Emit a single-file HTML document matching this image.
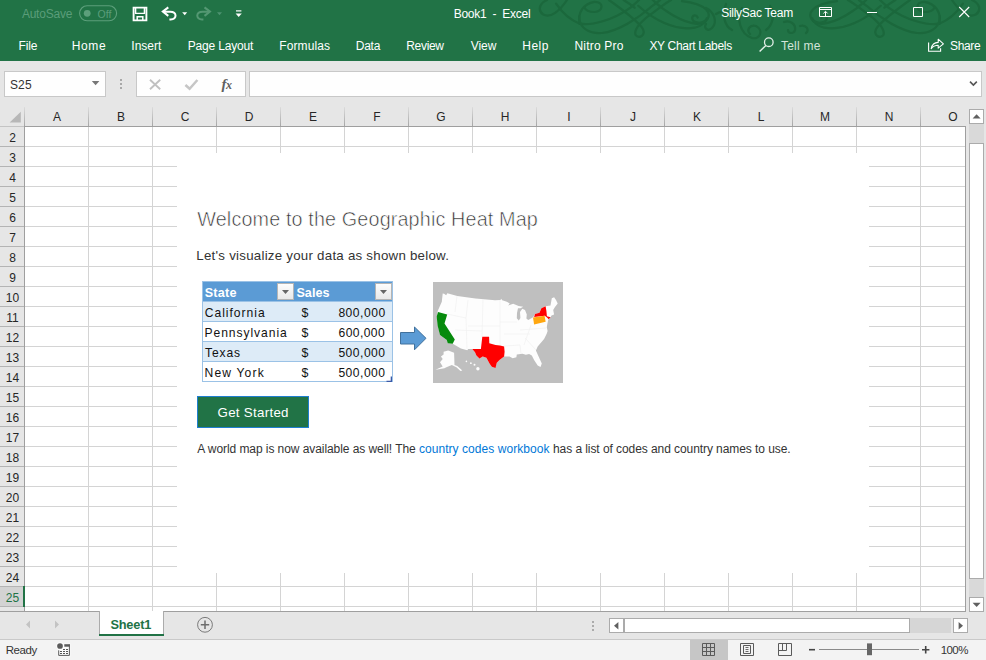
<!DOCTYPE html>
<html><head><meta charset="utf-8"><title>Book1 - Excel</title>
<style>
html,body{margin:0;padding:0;}
body{width:986px;height:660px;overflow:hidden;background:#e6e6e6;position:relative;font-family:"Liberation Sans",sans-serif;}
.a{position:absolute;}
.t{position:absolute;white-space:pre;line-height:1;}
.box{position:absolute;background:#fefefe;border:1px solid #c8c8c8;box-sizing:border-box;}
.ch{position:absolute;top:110.6px;width:64px;text-align:center;font-size:12px;line-height:1;color:#262626;}
.rh{position:absolute;left:1px;width:23px;text-align:center;font-size:12px;line-height:1;color:#262626;}
.vl{position:absolute;width:1px;background:#d4d4d4;}
.hl{position:absolute;height:1px;background:#d4d4d4;}
</style></head><body>

<div class="a" style="left:0;top:0;width:986px;height:61px;background:#217346;overflow:hidden;">
<svg class="a" style="left:0;top:0" width="986" height="61" fill="none" stroke="#1b673c" stroke-width="2.2" stroke-linecap="round" opacity="0.9"><path d="M 567.0 0.0 C 559.7 11.0 550.6 18.3 543.3 14.6 C 537.8 11.0 538.7 3.7 547.0 0.0"/><path d="M 556.1 3.7 C 563.4 14.6 572.5 21.0 579.8 23.7"/><path d="M 579.8 23.7 C 577.1 12.8 583.5 3.7 594.4 1.8 C 603.9 1.5 603.9 11.3 594.4 12.0 C 588.9 12.0 585.3 9.5 584.4 7.3"/><path d="M 579.8 23.7 C 590.8 25.9 612.7 20.4 630.9 7.3 L 639.1 0.0"/><path d="M 579.1 16.8 C 579.4 29.2 590.8 34.0 601.7 33.0 C 618.1 31.4 638.2 18.3 652.8 5.5 L 660.1 0.0"/><path d="M 609.0 0.0 C 621.8 9.1 634.6 18.3 641.9 27.4 C 647.7 35.0 638.2 39.8 635.5 34.7 C 633.7 29.2 641.9 20.1 652.8 12.8 C 660.1 7.3 667.4 1.8 671.1 0.0"/><path d="M 638.2 5.8 C 652.8 19.0 674.7 31.4 694.8 27.7 C 700.3 26.5 704.9 22.8 706.7 18.3"/><path d="M 652.8 0.0 C 663.8 11.0 682.0 22.3 696.6 23.9 C 708.0 24.1 711.6 15.0 706.1 9.5 C 700.7 4.0 691.5 2.2 682.0 1.1"/><path d="M 705.8 20.4 C 700.3 24.8 691.5 22.3 692.3 17.5 C 693.0 14.6 696.6 14.6 697.7 17.5"/><path d="M 623.6 0.0 C 627.3 2.2 630.9 4.7 634.6 7.7"/><path d="M 952.0 0.0 C 959.3 11.0 968.4 18.3 975.7 14.6 C 981.2 11.0 980.3 3.7 972.0 0.0"/><path d="M 962.9 3.7 C 955.6 14.6 946.5 21.0 939.2 23.7"/><path d="M 939.2 23.7 C 941.9 12.8 935.5 3.7 924.6 1.8 C 915.1 1.5 915.1 11.3 924.6 12.0 C 930.1 12.0 933.7 9.5 934.6 7.3"/><path d="M 939.2 23.7 C 928.2 25.9 906.3 20.4 888.1 7.3 L 879.9 0.0"/><path d="M 939.9 16.8 C 939.6 29.2 928.2 34.0 917.3 33.0 C 900.9 31.4 880.8 18.3 866.2 5.5 L 858.9 0.0"/><path d="M 910.0 0.0 C 897.2 9.1 884.4 18.3 877.1 27.4 C 871.3 35.0 880.8 39.8 883.5 34.7 C 885.3 29.2 877.1 20.1 866.2 12.8 C 858.9 7.3 851.6 1.8 847.9 0.0"/><path d="M 880.8 5.8 C 866.2 19.0 844.3 31.4 824.2 27.7 C 818.7 26.5 814.1 22.8 812.3 18.3"/><path d="M 866.2 0.0 C 855.2 11.0 837.0 22.3 822.4 23.9 C 811.0 24.1 807.4 15.0 812.9 9.5 C 818.3 4.0 827.5 2.2 837.0 1.1"/><path d="M 813.2 20.4 C 818.7 24.8 827.5 22.3 826.7 17.5 C 826.0 14.6 822.4 14.6 821.3 17.5"/><path d="M 895.4 0.0 C 891.7 2.2 888.1 4.7 884.4 7.7"/><path d="M706 8 C714 12 718 22 712 28 C708 32 703 28 706 24"/><path d="M726 4 C722 14 724 26 732 30"/><path d="M742 8 C736 18 740 34 752 38 C760 40 764 30 756 26 C750 24 746 30 750 34"/><path d="M770 6 C776 14 772 26 766 30"/><path d="M784 22 C790 20 796 24 795 30 C794 34 788 34 788 30"/><path d="M800 26 C806 24 810 30 806 33"/><path d="M716 14 C722 10 730 12 734 18"/></svg>
</div>
<div class="box" style="left:4px;top:71px;width:102px;height:26px;"></div>
<div class="box" style="left:136px;top:71px;width:110px;height:26px;"></div>
<div class="box" style="left:249px;top:71px;width:733px;height:26px;"></div>
<svg class="a" style="left:0;top:0" width="986" height="106" fill="none">
<rect x="79.6" y="5.8" width="37" height="15" rx="7.5" stroke="#5c9f7b" stroke-width="1.1"/>
<circle cx="87.2" cy="13.3" r="3.4" fill="#5c9f7b"/>
<path d="M133.6 7.6H146.4V20.4H133.6Z" stroke="#fff" stroke-width="1.9"/>
<path d="M135.6 8V13.4H144.4V8" stroke="#fff" stroke-width="1.4"/>
<path d="M137.2 20.4V16.8H142.8V20.4" stroke="#fff" stroke-width="1.5"/>
<path d="M168.3 7.4L162.8 11.6L168.3 15.9" stroke="#fff" stroke-width="2"/>
<path d="M163.4 11.7H170.2C177.2 11.7 177.2 19.4 170.8 19.4H169.4" stroke="#fff" stroke-width="2"/>
<path d="M182.2 12.2H187.2L184.7 15.2Z" fill="#fff"/>
<path d="M204.5 7.4L210 11.6L204.5 15.9" stroke="#549873" stroke-width="2"/>
<path d="M209.4 11.7H202.6C195.6 11.7 195.6 19.4 202 19.4H203.4" stroke="#549873" stroke-width="2"/>
<path d="M217 12.2H222L219.5 15.2Z" fill="#4d9270"/>
<path d="M236 10.9H241.4" stroke="#fff" stroke-width="1.2"/>
<path d="M235.6 13.4H241.8L238.7 17Z" fill="#fff"/>
<path d="M819.5 7.5H831.5V16.5H819.5Z" stroke="#fff" stroke-width="1"/>
<path d="M819.5 9.5H831.5" stroke="#fff" stroke-width="1"/>
<path d="M825.5 16V11.6M823.4 13.4L825.5 11.3L827.6 13.4" stroke="#fff" stroke-width="1"/>
<path d="M867 12.5H877" stroke="#fff" stroke-width="1"/>
<path d="M913.5 7.5H922.5V16.5H913.5Z" stroke="#fff" stroke-width="1"/>
<path d="M959.2 7L969.2 17M969.2 7L959.2 17" stroke="#fff" stroke-width="1.1"/>
<circle cx="768.8" cy="42.2" r="4.3" stroke="#e3efe8" stroke-width="1.3"/>
<path d="M765.8 45.4L759.6 51.6" stroke="#e3efe8" stroke-width="1.4"/>
<path d="M928.6 42.5V51.3H940.6V48.2" stroke="#fff" stroke-width="1.1"/>
<path d="M931.2 48.6C932 44.6 934.5 42.6 938.2 42.4V39.2L943.4 43.8L938.2 48.2V45.2C935.2 45.2 933 46.2 931.2 48.6Z" stroke="#fff" stroke-width="1.1" stroke-linejoin="round"/>
<path d="M91.8 81H99.4L95.6 85.2Z" fill="#777"/>
<rect x="120" y="79" width="2" height="2" fill="#a8a8a8"/>
<rect x="120" y="83" width="2" height="2" fill="#a8a8a8"/>
<rect x="120" y="87" width="2" height="2" fill="#a8a8a8"/>
<path d="M150 79.8L160.2 89.2M160.2 79.8L150 89.2" stroke="#c0c0c0" stroke-width="1.9"/>
<path d="M185.4 85L189.6 88.8L197.4 80" stroke="#c6c6c6" stroke-width="2.5"/>
<path d="M970 81.6L973.4 85L976.8 81.6" stroke="#555" stroke-width="1.6"/>
</svg>
<span class="t" style="left:221.5px;top:77px;font-family:'Liberation Serif',serif;font-style:italic;font-weight:700;font-size:15px;color:#606060;letter-spacing:-0.6px;">f<span style="font-size:12px;">x</span></span>
<div class="a" style="left:25px;top:127px;width:940px;height:484px;background:#fff;"></div>
<div class="vl" style="left:88px;top:127px;height:484px;"></div>
<div class="vl" style="left:152px;top:127px;height:484px;"></div>
<div class="vl" style="left:216px;top:127px;height:484px;"></div>
<div class="vl" style="left:280px;top:127px;height:484px;"></div>
<div class="vl" style="left:344px;top:127px;height:484px;"></div>
<div class="vl" style="left:408px;top:127px;height:484px;"></div>
<div class="vl" style="left:472px;top:127px;height:484px;"></div>
<div class="vl" style="left:536px;top:127px;height:484px;"></div>
<div class="vl" style="left:600px;top:127px;height:484px;"></div>
<div class="vl" style="left:664px;top:127px;height:484px;"></div>
<div class="vl" style="left:728px;top:127px;height:484px;"></div>
<div class="vl" style="left:792px;top:127px;height:484px;"></div>
<div class="vl" style="left:856px;top:127px;height:484px;"></div>
<div class="vl" style="left:920px;top:127px;height:484px;"></div>
<div class="hl" style="left:25px;top:146px;width:940px;"></div>
<div class="hl" style="left:25px;top:166px;width:940px;"></div>
<div class="hl" style="left:25px;top:186px;width:940px;"></div>
<div class="hl" style="left:25px;top:206px;width:940px;"></div>
<div class="hl" style="left:25px;top:226px;width:940px;"></div>
<div class="hl" style="left:25px;top:246px;width:940px;"></div>
<div class="hl" style="left:25px;top:266px;width:940px;"></div>
<div class="hl" style="left:25px;top:286px;width:940px;"></div>
<div class="hl" style="left:25px;top:306px;width:940px;"></div>
<div class="hl" style="left:25px;top:326px;width:940px;"></div>
<div class="hl" style="left:25px;top:346px;width:940px;"></div>
<div class="hl" style="left:25px;top:366px;width:940px;"></div>
<div class="hl" style="left:25px;top:386px;width:940px;"></div>
<div class="hl" style="left:25px;top:406px;width:940px;"></div>
<div class="hl" style="left:25px;top:426px;width:940px;"></div>
<div class="hl" style="left:25px;top:446px;width:940px;"></div>
<div class="hl" style="left:25px;top:466px;width:940px;"></div>
<div class="hl" style="left:25px;top:486px;width:940px;"></div>
<div class="hl" style="left:25px;top:506px;width:940px;"></div>
<div class="hl" style="left:25px;top:526px;width:940px;"></div>
<div class="hl" style="left:25px;top:546px;width:940px;"></div>
<div class="hl" style="left:25px;top:566px;width:940px;"></div>
<div class="hl" style="left:25px;top:586px;width:940px;"></div>
<div class="hl" style="left:25px;top:606px;width:940px;"></div>
<div class="a" style="left:24px;top:107px;width:1px;height:19px;background:linear-gradient(#dcdcdc,#a6a6a6);"></div>
<div class="a" style="left:88px;top:107px;width:1px;height:19px;background:linear-gradient(#dcdcdc,#a6a6a6);"></div>
<div class="a" style="left:152px;top:107px;width:1px;height:19px;background:linear-gradient(#dcdcdc,#a6a6a6);"></div>
<div class="a" style="left:216px;top:107px;width:1px;height:19px;background:linear-gradient(#dcdcdc,#a6a6a6);"></div>
<div class="a" style="left:280px;top:107px;width:1px;height:19px;background:linear-gradient(#dcdcdc,#a6a6a6);"></div>
<div class="a" style="left:344px;top:107px;width:1px;height:19px;background:linear-gradient(#dcdcdc,#a6a6a6);"></div>
<div class="a" style="left:408px;top:107px;width:1px;height:19px;background:linear-gradient(#dcdcdc,#a6a6a6);"></div>
<div class="a" style="left:472px;top:107px;width:1px;height:19px;background:linear-gradient(#dcdcdc,#a6a6a6);"></div>
<div class="a" style="left:536px;top:107px;width:1px;height:19px;background:linear-gradient(#dcdcdc,#a6a6a6);"></div>
<div class="a" style="left:600px;top:107px;width:1px;height:19px;background:linear-gradient(#dcdcdc,#a6a6a6);"></div>
<div class="a" style="left:664px;top:107px;width:1px;height:19px;background:linear-gradient(#dcdcdc,#a6a6a6);"></div>
<div class="a" style="left:728px;top:107px;width:1px;height:19px;background:linear-gradient(#dcdcdc,#a6a6a6);"></div>
<div class="a" style="left:792px;top:107px;width:1px;height:19px;background:linear-gradient(#dcdcdc,#a6a6a6);"></div>
<div class="a" style="left:856px;top:107px;width:1px;height:19px;background:linear-gradient(#dcdcdc,#a6a6a6);"></div>
<div class="a" style="left:920px;top:107px;width:1px;height:19px;background:linear-gradient(#dcdcdc,#a6a6a6);"></div>
<div class="ch" style="left:25px;">A</div>
<div class="ch" style="left:89px;">B</div>
<div class="ch" style="left:153px;">C</div>
<div class="ch" style="left:217px;">D</div>
<div class="ch" style="left:281px;">E</div>
<div class="ch" style="left:345px;">F</div>
<div class="ch" style="left:409px;">G</div>
<div class="ch" style="left:473px;">H</div>
<div class="ch" style="left:537px;">I</div>
<div class="ch" style="left:601px;">J</div>
<div class="ch" style="left:665px;">K</div>
<div class="ch" style="left:729px;">L</div>
<div class="ch" style="left:793px;">M</div>
<div class="ch" style="left:857px;">N</div>
<div class="ch" style="left:921px;">O</div>
<div class="a" style="left:966px;top:100px;width:20px;height:26px;background:#e6e6e6;"></div>
<div class="a" style="left:0;top:126px;width:966px;height:1px;background:#9f9f9f;"></div>
<div class="a" style="left:0;top:126px;width:24px;height:1px;background:#c4c4c4;"></div>
<div class="a" style="left:0;top:127px;width:24px;height:484px;background:#e6e6e6;"></div>
<div class="a" style="left:0;top:587px;width:24px;height:19px;background:#d3d3d3;"></div>
<div class="a" style="left:0;top:146px;width:24px;height:1px;background:#b4b4b4;"></div>
<div class="a" style="left:0;top:166px;width:24px;height:1px;background:#b4b4b4;"></div>
<div class="a" style="left:0;top:186px;width:24px;height:1px;background:#b4b4b4;"></div>
<div class="a" style="left:0;top:206px;width:24px;height:1px;background:#b4b4b4;"></div>
<div class="a" style="left:0;top:226px;width:24px;height:1px;background:#b4b4b4;"></div>
<div class="a" style="left:0;top:246px;width:24px;height:1px;background:#b4b4b4;"></div>
<div class="a" style="left:0;top:266px;width:24px;height:1px;background:#b4b4b4;"></div>
<div class="a" style="left:0;top:286px;width:24px;height:1px;background:#b4b4b4;"></div>
<div class="a" style="left:0;top:306px;width:24px;height:1px;background:#b4b4b4;"></div>
<div class="a" style="left:0;top:326px;width:24px;height:1px;background:#b4b4b4;"></div>
<div class="a" style="left:0;top:346px;width:24px;height:1px;background:#b4b4b4;"></div>
<div class="a" style="left:0;top:366px;width:24px;height:1px;background:#b4b4b4;"></div>
<div class="a" style="left:0;top:386px;width:24px;height:1px;background:#b4b4b4;"></div>
<div class="a" style="left:0;top:406px;width:24px;height:1px;background:#b4b4b4;"></div>
<div class="a" style="left:0;top:426px;width:24px;height:1px;background:#b4b4b4;"></div>
<div class="a" style="left:0;top:446px;width:24px;height:1px;background:#b4b4b4;"></div>
<div class="a" style="left:0;top:466px;width:24px;height:1px;background:#b4b4b4;"></div>
<div class="a" style="left:0;top:486px;width:24px;height:1px;background:#b4b4b4;"></div>
<div class="a" style="left:0;top:506px;width:24px;height:1px;background:#b4b4b4;"></div>
<div class="a" style="left:0;top:526px;width:24px;height:1px;background:#b4b4b4;"></div>
<div class="a" style="left:0;top:546px;width:24px;height:1px;background:#b4b4b4;"></div>
<div class="a" style="left:0;top:566px;width:24px;height:1px;background:#b4b4b4;"></div>
<div class="a" style="left:0;top:586px;width:24px;height:1px;background:#b4b4b4;"></div>
<div class="a" style="left:0;top:606px;width:24px;height:1px;background:#b4b4b4;"></div>
<div class="rh" style="top:131.64px">2</div>
<div class="rh" style="top:151.64px">3</div>
<div class="rh" style="top:171.64px">4</div>
<div class="rh" style="top:191.64px">5</div>
<div class="rh" style="top:211.64px">6</div>
<div class="rh" style="top:231.64px">7</div>
<div class="rh" style="top:251.64px">8</div>
<div class="rh" style="top:271.64px">9</div>
<div class="rh" style="top:291.64px">10</div>
<div class="rh" style="top:311.64px">11</div>
<div class="rh" style="top:331.64px">12</div>
<div class="rh" style="top:351.64px">13</div>
<div class="rh" style="top:371.64px">14</div>
<div class="rh" style="top:391.64px">15</div>
<div class="rh" style="top:411.64px">16</div>
<div class="rh" style="top:431.64px">17</div>
<div class="rh" style="top:451.64px">18</div>
<div class="rh" style="top:471.64px">19</div>
<div class="rh" style="top:491.64px">20</div>
<div class="rh" style="top:511.64px">21</div>
<div class="rh" style="top:531.64px">22</div>
<div class="rh" style="top:551.64px">23</div>
<div class="rh" style="top:571.64px">24</div>
<div class="rh" style="top:591.64px;color:#217346">25</div>
<div class="a" style="left:24px;top:127px;width:1px;height:484px;background:#9f9f9f;"></div>
<div class="a" style="left:23px;top:586px;width:2px;height:21px;background:#217346;"></div>
<svg class="a" style="left:0;top:107px" width="24" height="19"><path d="M20.8 4.7V15.6H9.6Z" fill="#b7b7b7"/></svg>
<div class="a" style="left:965px;top:126px;width:1px;height:486px;background:#9f9f9f;"></div>
<div class="a" style="left:0;top:611px;width:966px;height:1px;background:#9f9f9f;"></div>
<div class="a" style="left:177px;top:153px;width:692px;height:420px;background:#fff;"></div>
<div class="a" style="left:202px;top:281px;width:191px;height:101px;background:#9bc2e6;"></div>
<div class="a" style="left:203px;top:282px;width:189px;height:19px;background:#5b9bd5;"></div>
<div class="a" style="left:203px;top:302px;width:189px;height:19px;background:#ddebf7;"></div>
<div class="a" style="left:203px;top:322px;width:189px;height:19px;background:#ffffff;"></div>
<div class="a" style="left:203px;top:342px;width:189px;height:19px;background:#ddebf7;"></div>
<div class="a" style="left:203px;top:362px;width:189px;height:19px;background:#ffffff;"></div>
<div class="a" style="left:277px;top:283px;width:17px;height:17px;box-sizing:border-box;border:1px solid #b5b5b5;background:linear-gradient(#fdfdfd,#e9e9e9);"></div>
<svg class="a" style="left:277px;top:283px" width="17" height="17"><path d="M5 7H12L8.5 11Z" fill="#666"/></svg>
<div class="a" style="left:375px;top:283px;width:17px;height:17px;box-sizing:border-box;border:1px solid #b5b5b5;background:linear-gradient(#fdfdfd,#e9e9e9);"></div>
<svg class="a" style="left:375px;top:283px" width="17" height="17"><path d="M5 7H12L8.5 11Z" fill="#666"/></svg>
<svg class="a" style="left:386px;top:376px" width="6" height="6"><path d="M5.5 0.5V5.5H0.5" stroke="#3b5aa8" stroke-width="1.6" fill="none"/></svg>
<svg class="a" style="left:396px;top:322px" width="34" height="32"><path d="M4.5 10.5H18.5V5L30 16.3L18.5 27.8V22H4.5Z" fill="#5b9bd5" stroke="#41719c" stroke-width="1"/></svg>
<div class="a" style="left:433px;top:282px;width:130px;height:101px;background:#bfbfbf;"></div>
<svg class="a" style="left:0;top:0" width="986" height="660">
<polygon points="442.7,293.4 444.1,293.8 446.2,295.2 447.3,293.2 457.3,295.9 475.5,298.6 495.0,300.3 500.5,299.9 501.2,298.8 502.2,300.2 506.8,301.8 509.8,303.6 508.2,305.6 513.2,303.8 518.6,306.0 523.2,306.8 520.5,308.2 518.0,308.2 517.0,313.0 516.8,318.2 518.8,320.4 520.4,318.0 520.0,312.0 522.3,308.8 525.0,310.0 526.8,314.5 526.4,318.4 528.2,320.0 533.2,317.3 535.0,314.1 539.5,312.7 541.4,308.2 545.5,306.2 550.5,305.5 551.8,298.2 554.1,297.3 556.0,300.0 557.7,303.6 555.0,307.0 553.2,310.0 554.1,314.4 551.5,315.6 550.5,317.3 548.6,319.3 548.2,320.0 547.3,324.0 546.8,327.3 547.6,331.0 546.8,333.6 544.1,339.1 537.7,346.4 535.9,350.5 538.6,356.4 541.8,363.6 540.5,367.1 537.7,365.5 534.1,360.0 531.8,355.5 529.1,354.1 525.9,354.7 522.3,353.8 516.8,354.5 516.4,357.3 512.7,358.2 509.5,356.4 505.0,356.6 504.1,356.4 499.5,360.0 496.8,362.7 495.5,367.7 491.8,366.8 489.5,363.6 486.4,357.7 482.7,356.4 479.5,358.2 476.4,355.5 475.0,352.3 472.3,349.1 468.2,349.1 467.3,350.2 460.9,348.6 452.7,343.8 447.7,343.2 446.8,340.0 440.0,335.0 437.7,325.5 436.8,316.4 437.7,310.9 441.8,301.8" fill="#fdfdfd"/>
<polygon points="443.6,351.8 448.2,350.6 454.1,352.7 454.5,365.0 457.3,365.9 462.3,370.5 460.5,370.9 456.4,367.3 451.8,365.0 446.4,367.3 444.5,368.2 435.5,369.8 442.7,366.4 440.0,362.3 442.7,359.1 440.9,356.4 443.6,354.5" fill="#fdfdfd"/>
<circle cx="466.4" cy="361.4" r="0.8" fill="#fdfdfd"/>
<circle cx="470.9" cy="363.2" r="0.9" fill="#fdfdfd"/>
<circle cx="474.5" cy="364.8" r="1.0" fill="#fdfdfd"/>
<circle cx="477.9" cy="368.8" r="1.7" fill="#fdfdfd"/>
<path d="M457 296L455 312M447 314L466 318M466 318L467 349M466 318L468 300M483 299L482 337M468 326H500M455 330L482 331M500 300V345M500 322H517M504 346L520 345L521 354M504 334H530M520 330L546 328M531 325L524 345M536 350L525 338" stroke="#f1f1f1" stroke-width="0.7" fill="none"/>
<polygon points="438.0,312.1 447.2,314.4 444.5,323.6 454.8,339.6 452.7,343.8 447.7,343.2 446.8,340.0 440.0,335.0 437.6,325.5 436.7,316.4" fill="#068a0c"/>
<polygon points="472.3,349.1 480.9,349.1 482.3,336.8 489.1,336.8 489.3,343.2 495.5,345.0 500.0,345.6 504.1,346.4 504.6,351.8 504.1,356.4 499.5,360.0 496.8,362.7 495.5,367.9 491.8,366.8 489.5,363.6 486.4,357.7 482.7,356.4 479.5,358.4 476.4,355.5 475.0,352.3" fill="#ff0000"/>
<polygon points="535.0,314.1 539.5,312.7 541.4,308.2 545.6,306.2 546.4,311.0 546.9,316.2 550.6,317.2 548.6,319.3 547.3,317.7 544.8,315.8 534.1,317.1" fill="#ff0000"/>
<polygon points="533.0,317.4 544.6,315.8 545.6,321.8 534.1,324.4" fill="#ffa710"/>
</svg>
<div class="a" style="left:197px;top:396px;width:112px;height:32px;box-sizing:border-box;background:#217346;border:1px solid #1f7fd0;"></div>
<div class="a" style="left:0;top:612px;width:986px;height:27px;background:#e6e6e6;"></div>
<div class="a" style="left:0;top:639px;width:986px;height:1px;background:#c9c9c9;"></div>
<div class="a" style="left:0;top:640px;width:986px;height:20px;background:#f3f3f3;"></div>
<div class="a" style="left:99px;top:611px;width:65px;height:25px;background:#fff;"></div>
<div class="a" style="left:99px;top:611px;width:1px;height:25px;background:#ababab;"></div>
<div class="a" style="left:163px;top:611px;width:1px;height:25px;background:#ababab;"></div>
<div class="a" style="left:99px;top:634px;width:65px;height:2px;background:#217346;"></div>
<svg class="a" style="left:0;top:611px" width="986" height="49" fill="none">
<path d="M30 9.4V17.4L26 13.4Z" fill="#c3c3c3"/>
<path d="M55 9.4V17.4L59 13.4Z" fill="#c3c3c3"/>
<circle cx="205" cy="13.8" r="7.4" stroke="#7a7a7a" stroke-width="1"/>
<path d="M200.8 13.8H209.2M205 9.6V18" stroke="#6e6e6e" stroke-width="1.5"/>
<rect x="592" y="10" width="2" height="2" fill="#ababab"/>
<rect x="592" y="14" width="2" height="2" fill="#ababab"/>
<rect x="592" y="18" width="2" height="2" fill="#ababab"/>
<rect x="609" y="7" width="359" height="15" fill="#d6d6d6"/>
<rect x="609.5" y="7.5" width="14" height="14" fill="#fff" stroke="#ababab"/>
<path d="M618.4 11V18.4L614 14.7Z" fill="#606060"/>
<rect x="624.5" y="7.5" width="285" height="14" fill="#fff" stroke="#ababab"/>
<rect x="951" y="7" width="17" height="15" fill="#e6e6e6"/>
<rect x="953.5" y="7.5" width="14" height="14" fill="#fff" stroke="#ababab"/>
<path d="M958.6 11V18.4L963 14.7Z" fill="#606060"/>
<rect x="57.6" y="32.6" width="12.8" height="12.8" fill="#fbfbfb"/>
<circle cx="60" cy="35" r="3.7" fill="#fbfbfb"/>
<circle cx="60" cy="35" r="2.85" fill="#5a5a5a"/>
<rect x="64.3" y="33.2" width="5.5" height="2.5" fill="#5a5a5a"/>
<path d="M58.7 39.3V44.4H69.4V33.4" stroke="#5a5a5a" stroke-width="1"/>
<rect x="63" y="38" width="2" height="1" fill="#555"/>
<rect x="66" y="38" width="2" height="1" fill="#555"/>
<rect x="60" y="40" width="2" height="1" fill="#555"/>
<rect x="63" y="40" width="2" height="1" fill="#555"/>
<rect x="66" y="40" width="2" height="1" fill="#555"/>
<rect x="60" y="42" width="2" height="1" fill="#555"/>
<rect x="63" y="42" width="2" height="1" fill="#555"/>
<rect x="66" y="42" width="2" height="1" fill="#555"/>
<rect x="690" y="29" width="38" height="20" fill="#c6c6c6"/>
<path d="M702.5 32.5H714.5V44.5H702.5ZM706.5 32.5V44.5M710.5 32.5V44.5M702.5 36.5H714.5M702.5 40.5H714.5" stroke="#5a5a5a" stroke-width="1"/>
<path d="M740.5 32.5H753.5V44.5H740.5Z" stroke="#5a5a5a" stroke-width="1"/>
<path d="M743.5 34.5H750.5V42.5H743.5Z" stroke="#5a5a5a" stroke-width="1"/>
<path d="M745.5 36.5H748.5M745.5 38.5H748.5M745.5 40.5H748.5" stroke="#6a6a6a" stroke-width="1"/>
<path d="M778.5 32.5H791.5V44.5H778.5ZM778.5 39.5H786.5V32.5M782.5 32.5V39.5" stroke="#5a5a5a" stroke-width="1"/>
<path d="M809 38.7H815" stroke="#444" stroke-width="1.6"/>
<path d="M819 38.5H919" stroke="#8a8a8a" stroke-width="1"/>
<rect x="867" y="32.4" width="5" height="11.8" fill="#666"/>
<path d="M922 38.7H929.4M925.7 35V42.4" stroke="#444" stroke-width="1.6"/>
</svg>
<svg class="a" style="left:966px;top:106px" width="20" height="506" fill="none">
<rect x="3" y="3" width="15" height="503" fill="#d9d9d9"/>
<rect x="3.5" y="3.5" width="14" height="14" fill="#fff" stroke="#ababab"/>
<path d="M6.6 12.4H14.6L10.6 8.2Z" fill="#606060"/>
<rect x="3.5" y="37.5" width="14" height="435" fill="#fff" stroke="#ababab"/>
<rect x="3.5" y="491.5" width="14" height="14" fill="#fff" stroke="#ababab"/>
<path d="M6.6 496.8H14.6L10.6 501Z" fill="#606060"/>
</svg>
<span class="t" style="left:21.88px;top:7.84px;font-size:12.0px;letter-spacing:-0.214px;color:#5a9d7a;">AutoSave</span>
<span class="t" style="left:97.42px;top:9.11px;font-size:10.5px;letter-spacing:0.134px;color:#5a9d7a;">Off</span>
<span class="t" style="left:453.67px;top:7.84px;font-size:12.0px;letter-spacing:-0.268px;color:#ffffff;">Book1  -  Excel</span>
<span class="t" style="left:721.16px;top:6.84px;font-size:12.0px;letter-spacing:-0.259px;color:#ffffff;">SillySac Team</span>
<span class="t" style="left:18.49px;top:39.84px;font-size:12.0px;letter-spacing:-0.107px;color:#ffffff;">File</span>
<span class="t" style="left:71.69px;top:39.84px;font-size:12.0px;letter-spacing:0.655px;color:#ffffff;">Home</span>
<span class="t" style="left:131.37px;top:39.84px;font-size:12.0px;letter-spacing:-0.007px;color:#ffffff;">Insert</span>
<span class="t" style="left:187.69px;top:39.84px;font-size:12.0px;letter-spacing:-0.164px;color:#ffffff;">Page Layout</span>
<span class="t" style="left:279.30px;top:39.84px;font-size:12.0px;letter-spacing:0.097px;color:#ffffff;">Formulas</span>
<span class="t" style="left:355.69px;top:39.84px;font-size:12.0px;letter-spacing:-0.214px;color:#ffffff;">Data</span>
<span class="t" style="left:406.29px;top:39.84px;font-size:12.0px;letter-spacing:-0.329px;color:#ffffff;">Review</span>
<span class="t" style="left:470.67px;top:39.84px;font-size:12.0px;letter-spacing:-0.028px;color:#ffffff;">View</span>
<span class="t" style="left:522.30px;top:39.84px;font-size:12.0px;letter-spacing:0.445px;color:#ffffff;">Help</span>
<span class="t" style="left:574.49px;top:39.84px;font-size:12.0px;letter-spacing:0.184px;color:#ffffff;">Nitro Pro</span>
<span class="t" style="left:649.38px;top:39.84px;font-size:12.0px;letter-spacing:-0.313px;color:#ffffff;">XY Chart Labels</span>
<span class="t" style="left:780.96px;top:39.84px;font-size:12.0px;letter-spacing:0.236px;color:#d3e5da;">Tell me</span>
<span class="t" style="left:950.04px;top:39.84px;font-size:12.0px;letter-spacing:-0.345px;color:#ffffff;">Share</span>
<span class="t" style="left:9.97px;top:78.84px;font-size:12.0px;letter-spacing:0.122px;color:#333333;">S25</span>
<span class="t" style="left:197.27px;top:210.24px;font-size:19.8px;letter-spacing:0.134px;color:#2e2e2e;-webkit-text-stroke:0.6px #fff;">Welcome to the Geographic Heat Map</span>
<span class="t" style="left:196.35px;top:248.74px;font-size:13.3px;letter-spacing:0.245px;color:#333333;">Let's visualize your data as shown below.</span>
<span class="t" style="left:197.28px;top:442.84px;font-size:12.0px;letter-spacing:-0.070px;color:#333333;">A world map is now available as well! The</span>
<span class="t" style="left:418.95px;top:442.84px;font-size:12.0px;letter-spacing:0.051px;color:#0078d7;">country codes workbook</span>
<span class="t" style="left:552.99px;top:442.84px;font-size:12.0px;letter-spacing:-0.072px;color:#333333;">has a list of codes and country names to use.</span>
<span class="t" style="left:217.49px;top:405.74px;font-size:13.3px;letter-spacing:0.301px;color:#ffffff;">Get Started</span>
<span class="t" style="left:204.65px;top:287.33px;font-size:12.6px;letter-spacing:0.268px;color:#ffffff;font-weight:700;">State</span>
<span class="t" style="left:296.44px;top:287.33px;font-size:12.6px;letter-spacing:0.023px;color:#ffffff;font-weight:700;">Sales</span>
<span class="t" style="left:204.75px;top:306.76px;font-size:12.1px;letter-spacing:0.985px;color:#111111;">California</span>
<span class="t" style="left:301.61px;top:306.50px;font-size:12.4px;letter-spacing:0.000px;color:#111111;">$</span>
<span class="t" style="left:338.38px;top:306.76px;font-size:12.1px;letter-spacing:0.502px;color:#111111;">800,000</span>
<span class="t" style="left:204.49px;top:326.76px;font-size:12.1px;letter-spacing:0.938px;color:#111111;">Pennsylvania</span>
<span class="t" style="left:301.61px;top:326.50px;font-size:12.4px;letter-spacing:0.000px;color:#111111;">$</span>
<span class="t" style="left:338.50px;top:326.76px;font-size:12.1px;letter-spacing:0.410px;color:#111111;">600,000</span>
<span class="t" style="left:204.96px;top:346.76px;font-size:12.1px;letter-spacing:0.895px;color:#111111;">Texas</span>
<span class="t" style="left:301.61px;top:346.50px;font-size:12.4px;letter-spacing:0.000px;color:#111111;">$</span>
<span class="t" style="left:338.40px;top:346.76px;font-size:12.1px;letter-spacing:0.494px;color:#111111;">500,000</span>
<span class="t" style="left:204.49px;top:366.76px;font-size:12.1px;letter-spacing:1.160px;color:#111111;">New York</span>
<span class="t" style="left:301.61px;top:366.50px;font-size:12.4px;letter-spacing:0.000px;color:#111111;">$</span>
<span class="t" style="left:338.40px;top:366.76px;font-size:12.1px;letter-spacing:0.494px;color:#111111;">500,000</span>
<span class="t" style="left:110.43px;top:619.16px;font-size:12.8px;letter-spacing:-0.210px;color:#217346;font-weight:700;">Sheet1</span>
<span class="t" style="left:5.71px;top:645.27px;font-size:11.5px;letter-spacing:-0.401px;color:#333333;">Ready</span>
<span class="t" style="left:940.63px;top:645.27px;font-size:11.5px;letter-spacing:-0.554px;color:#333333;">100%</span>
</body></html>
